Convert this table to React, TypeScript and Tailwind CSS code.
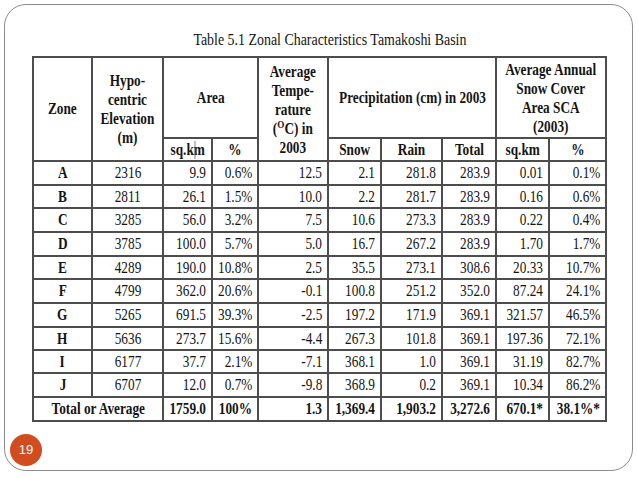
import React from 'react';

type Row = { zone: string; elev: string; vals: string[] };

const rows: Row[] = [
  { zone: 'A', elev: '2316', vals: ['9.9', '0.6%', '12.5', '2.1', '281.8', '283.9', '0.01', '0.1%'] },
  { zone: 'B', elev: '2811', vals: ['26.1', '1.5%', '10.0', '2.2', '281.7', '283.9', '0.16', '0.6%'] },
  { zone: 'C', elev: '3285', vals: ['56.0', '3.2%', '7.5', '10.6', '273.3', '283.9', '0.22', '0.4%'] },
  { zone: 'D', elev: '3785', vals: ['100.0', '5.7%', '5.0', '16.7', '267.2', '283.9', '1.70', '1.7%'] },
  { zone: 'E', elev: '4289', vals: ['190.0', '10.8%', '2.5', '35.5', '273.1', '308.6', '20.33', '10.7%'] },
  { zone: 'F', elev: '4799', vals: ['362.0', '20.6%', '-0.1', '100.8', '251.2', '352.0', '87.24', '24.1%'] },
  { zone: 'G', elev: '5265', vals: ['691.5', '39.3%', '-2.5', '197.2', '171.9', '369.1', '321.57', '46.5%'] },
  { zone: 'H', elev: '5636', vals: ['273.7', '15.6%', '-4.4', '267.3', '101.8', '369.1', '197.36', '72.1%'] },
  { zone: 'I', elev: '6177', vals: ['37.7', '2.1%', '-7.1', '368.1', '1.0', '369.1', '31.19', '82.7%'] },
  { zone: 'J', elev: '6707', vals: ['12.0', '0.7%', '-9.8', '368.9', '0.2', '369.1', '10.34', '86.2%'] },
];

const totals = ['1759.0', '100%', '1.3', '1,369.4', '1,903.2', '3,272.6', '670.1*', '38.1%*'];

const cell = 'border-r-2 border-b-2 border-[#4d4d4d] flex items-center';

function Num({ children, bold = false }: { children: React.ReactNode; bold?: boolean }) {
  return (
    <div className={`${cell} justify-end pr-[5px] ${bold ? 'font-bold' : ''}`}>
      <span className="inline-block origin-right scale-x-[0.83] whitespace-nowrap">{children}</span>
    </div>
  );
}

function Mid({ children, className = '' }: { children: React.ReactNode; className?: string }) {
  return (
    <div className={`${cell} justify-center ${className}`}>
      <span className="inline-block origin-center scale-x-[0.83] whitespace-nowrap text-center">{children}</span>
    </div>
  );
}

export default function App() {
  return (
    <div className="w-[638px] h-[478px] bg-white pt-[4px] pl-[4px] font-['Liberation_Serif','Times_New_Roman',serif] text-[16px] leading-[18px] text-[#141414]">
      <div className="relative w-[629px] h-[467px] rounded-[22px] border border-[#8c8c8c] pt-[25px] pl-[27px]">
        <div className="w-[575px] pl-[20px] text-center leading-[20px] mb-[6px]">
          <span className="inline-block origin-center scale-x-[0.87] whitespace-nowrap">
            Table 5.1 Zonal Characteristics Tamakoshi Basin
          </span>
        </div>

        <div className="grid w-fit grid-cols-[59px_71px_49px_46px_70px_53px_61px_54px_53px_57px] grid-rows-[81px_23px_24px_23px_24px_24px_23px_24px_24px_23px_23px_24px_24px] border-l-2 border-t-2 border-[#4d4d4d]">
          {/* header */}
          <Mid className="row-span-2 font-bold">Zone</Mid>
          <Mid className="row-span-2 font-bold leading-[19px]">
            Hypo-<br />centric<br />Elevation<br />(m)
          </Mid>
          <Mid className="col-span-2 font-bold">Area</Mid>
          <Mid className="row-span-2 font-bold leading-[19px]">
            Average<br />Tempe-<br />rature<br />(<sup className="text-[11px] top-[-0.5em]">O</sup>C) in<br />2003
          </Mid>
          <Mid className="col-span-3 font-bold">Precipitation (cm) in 2003</Mid>
          <Mid className="col-span-2 font-bold leading-[19px]">
            Average Annual<br />Snow Cover<br />Area SCA<br />(2003)
          </Mid>
          <Mid className="relative font-bold">
            sq.km
            <span className="absolute left-[29px] top-0 h-full w-px bg-[#666]" />
          </Mid>
          <Mid className="font-bold">%</Mid>
          <Mid className="font-bold">Snow</Mid>
          <Mid className="font-bold">Rain</Mid>
          <Mid className="font-bold">Total</Mid>
          <Mid className="font-bold">sq.km</Mid>
          <Mid className="font-bold">%</Mid>

          {/* data */}
          {rows.map((r) => (
            <React.Fragment key={r.zone}>
              <Mid className="font-bold">{r.zone}</Mid>
              <Mid>{r.elev}</Mid>
              {r.vals.map((v, i) => (
                <Num key={i}>{v}</Num>
              ))}
            </React.Fragment>
          ))}

          <Mid className="col-span-2 font-bold">Total or Average</Mid>
          {totals.map((v, i) => (
            <Num key={i} bold>
              {v}
            </Num>
          ))}
        </div>

        <div className="absolute left-[5px] bottom-[4px] w-[32px] h-[32px] rounded-full bg-[#d14c1e] flex items-center justify-center text-white text-[13px] font-['Liberation_Sans',Arial,sans-serif]">
          19
        </div>
      </div>
    </div>
  );
}
